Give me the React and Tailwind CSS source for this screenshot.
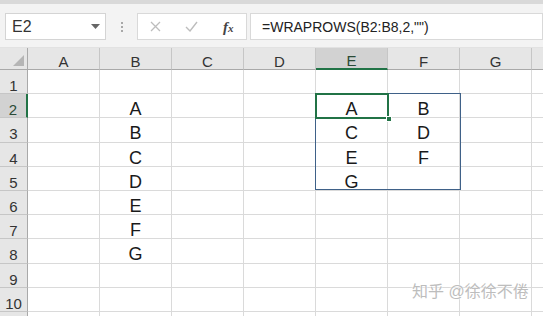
import React from 'react';

const COLS = ['A', 'B', 'C', 'D', 'E', 'F', 'G'];
const ROWS = [1, 2, 3, 4, 5, 6, 7, 8, 9, 10, 11];

// valori celle: chiave "colonna+riga"
const CELLS = {
  B2: 'A', B3: 'B', B4: 'C', B5: 'D', B6: 'E', B7: 'F', B8: 'G',
  E2: 'A', F2: 'B', E3: 'C', F3: 'D', E4: 'E', F4: 'F', E5: 'G',
};

const Toolbar = () => (
  <div className="h-[43px] bg-[#f3f3f3] flex items-start pt-[9px] pl-[5px]">
    {/* casella nome */}
    <div className="w-[101px] h-[27px] bg-white border border-[#d4d4d4] flex items-center justify-between pl-[6px] pr-[5px]">
      <span className="text-[16px] leading-[25px] text-[#333]">E2</span>
      <svg width="9" height="5" viewBox="0 0 9 5"><path d="M0 0h9L4.5 5z" fill="#666" /></svg>
    </div>
    <div className="w-[31px] h-[27px] flex flex-col items-center justify-center gap-[2px]">
      <span className="w-[2px] h-[2px] bg-[#a8a8a8]" />
      <span className="w-[2px] h-[2px] bg-[#a8a8a8]" />
      <span className="w-[2px] h-[2px] bg-[#a8a8a8]" />
    </div>
    {/* pulsanti annulla / conferma / fx */}
    <div className="w-[110px] h-[27px] bg-white border border-[#d9d9d9] flex items-center">
      <svg className="ml-[12px]" width="11" height="11" viewBox="0 0 11 11">
        <path d="M1 1l9 9M10 1l-9 9" stroke="#bdbdbd" strokeWidth="1.3" />
      </svg>
      <svg className="ml-[24px]" width="13" height="11" viewBox="0 0 13 11">
        <path d="M1 6l4 4 7-9" stroke="#bdbdbd" strokeWidth="1.4" fill="none" />
      </svg>
      <span className="ml-[25px] italic text-[#444] leading-none" style={{ fontFamily: '"Liberation Serif", serif' }}>
        <span className="text-[15px] font-bold">f</span>
        <span className="text-[11px] font-bold">x</span>
      </span>
    </div>
    {/* barra della formula */}
    <div className="ml-[3px] flex-1 h-[27px] bg-white border border-[#d9d9d9] pl-[11px]">
      <span className="block text-[14px] leading-[25px] pt-[1px] text-[#222]">=WRAPROWS(B2:B8,2,"")</span>
    </div>
  </div>
);

const Sheet = () => (
  <div className="grid grid-cols-[28px_repeat(7,72px)_1fr] grid-rows-[22px_repeat(11,24.2px)] border-t border-[#e2e2e2]">
    {/* angolo */}
    <div className="bg-[#e6e6e6] border-r border-b border-[#a9a9a9] flex items-end justify-end pr-[3px] pb-[3px]">
      <svg width="11" height="11" viewBox="0 0 11 11"><path d="M11 0v11H0z" fill="#b5b5b5" /></svg>
    </div>
    {COLS.map((c) => (
      <div
        key={c}
        className={
          c === 'E'
            ? 'bg-[#d2d2d2] border-r border-r-[#c6c6c6] border-b-2 border-b-[#217346] text-center text-[15px] leading-[22px] pt-[2px] text-[#2a4a36]'
            : 'bg-[#e6e6e6] border-r border-r-[#c6c6c6] border-b border-b-[#a9a9a9] text-center text-[15px] leading-[22px] pt-[3px] text-[#333]'
        }
      >
        {c}
      </div>
    ))}
    <div className="bg-[#e6e6e6] border-b border-[#a9a9a9]" />

    {ROWS.map((r) => (
      <React.Fragment key={r}>
        <div
          className={
            r === 2
              ? 'bg-[#d2d2d2] border-r-2 border-r-[#217346] border-b border-b-[#c6c6c6] text-center text-[15px] leading-[22px] pt-[5px] text-[#2a4a36]'
              : 'bg-[#e6e6e6] border-r border-r-[#a9a9a9] border-b border-b-[#c6c6c6] text-center text-[15px] leading-[22px] pt-[5px] text-[#333]'
          }
        >
          {r < 11 ? r : ''}
        </div>
        {COLS.map((c) => {
          const id = c + r;
          return (
            <div key={id} className="relative border-r border-b border-[#dadada] text-center text-[18px] leading-[22px] pt-[4px] text-[#1a1a1a]">
              {CELLS[id]}
              {id === 'E2' && (
                <>
                  {/* bordo dell'intervallo di espansione */}
                  <div className="absolute z-10 left-[-1px] top-[-1px] w-[146px] h-[97px] border border-[#3f6188] pointer-events-none" />
                  {/* cella attiva */}
                  <div className="absolute z-20 left-[-1px] top-[-1px] w-[74px] h-[26px] border-2 border-[#217346] pointer-events-none" />
                  <div className="absolute z-20 left-[70px] top-[22px] w-[6px] h-[6px] bg-[#217346] border border-white" />
                </>
              )}
            </div>
          );
        })}
        <div className="border-b border-[#dadada]" />
      </React.Fragment>
    ))}
  </div>
);

export default function App() {
  return (
    <div
      className="relative w-[543px] h-[316px] overflow-hidden bg-white"
      style={{ fontFamily: '"Liberation Sans", "Noto Sans CJK SC", sans-serif' }}
    >
      <div className="h-[4px] bg-[#d9d9d9]" />
      <Toolbar />
      <Sheet />
      {/* filigrana */}
      <div
        className="absolute z-30 left-[412px] top-[282px] text-[16px] leading-[20px] text-[#bdbdbd]"
        style={{ textShadow: '0 0 2px #fff, 0 0 2px #fff' }}
      >
        知乎 @徐徐不倦
      </div>
    </div>
  );
}
